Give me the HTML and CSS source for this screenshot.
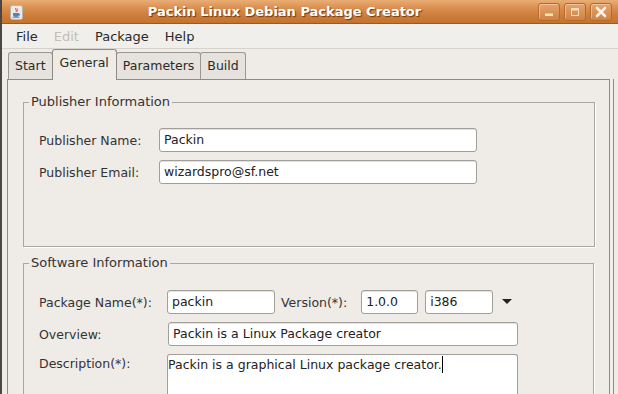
FILE: index.html
```html
<!DOCTYPE html>
<html>
<head>
<meta charset="utf-8">
<link rel="stylesheet" href="styles.css">
</head>
<body>
<div class="window">
  <div class="titlebar">
    <svg class="appicon" width="13" height="15" viewBox="0 0 13 15">
      <rect x="0.5" y="0.5" width="12" height="14" rx="2" fill="#eceae6" stroke="#b9b4ad"/>
      <path d="M6 3 C4.5 4.5 7.5 5 6 7" stroke="#d2452b" stroke-width="1" fill="none"/>
      <path d="M7.5 3.5 C6.8 4.5 8.3 5 7.4 6.5" stroke="#d2452b" stroke-width="0.8" fill="none"/>
      <path d="M3 8 h6 v1.5 a3 2.5 0 0 1 -6 0 z" fill="#5a7fb6"/>
      <path d="M9 8.6 a1.2 1.2 0 0 1 0 2.2" stroke="#5a7fb6" stroke-width="0.9" fill="none"/>
      <path d="M2.5 12.3 h7" stroke="#5a7fb6" stroke-width="0.9"/>
    </svg>
    <div class="title">Packin Linux Debian Package Creator</div>
    <div class="wbtns">
      <span class="wbtn"><svg width="10" height="10" viewBox="0 0 10 10"><rect x="1" y="6.5" width="8" height="2.5" fill="#f6e6b4"/></svg></span>
      <span class="wbtn"><svg width="10" height="10" viewBox="0 0 10 10"><rect x="1.5" y="1.5" width="7" height="7" fill="none" stroke="#f4dcb8" stroke-width="1"/><rect x="1.5" y="1.5" width="7" height="2" fill="#f4dcb8"/></svg></span>
      <span class="wbtn"><svg width="12" height="12" viewBox="0 0 12 12"><path d="M2 2 L10 10 M10 2 L2 10" stroke="#fbf3ea" stroke-width="2.6" stroke-linecap="round"/></svg></span>
    </div>
  </div>
  <div class="menubar">
    <span class="menu">File</span>
    <span class="menu disabled">Edit</span>
    <span class="menu">Package</span>
    <span class="menu">Help</span>
  </div>
  <div class="tabs">
    <div class="tab">Start</div>
    <div class="tab sel">General</div>
    <div class="tab">Parameters</div>
    <div class="tab">Build</div>
  </div>
  <div class="panel">
    <fieldset class="group pub">
      <legend>Publisher Information</legend>
      <div class="form pubform">
        <span class="lbl">Publisher Name:</span><span class="field w318">Packin</span>
        <span class="lbl">Publisher Email:</span><span class="field w318">wizardspro@sf.net</span>
      </div>
    </fieldset>
    <fieldset class="group soft">
      <legend>Software Information</legend>
      <div class="form softform">
        <span class="lbl">Package Name(*):</span>
        <div class="row">
          <span class="field wname">packin</span>
          <span class="lbl ver">Version(*):</span>
          <span class="field wver">1.0.0</span>
          <div class="combo">
            <span class="field warch">i386</span>
            <span class="arrow"><svg width="10" height="6" viewBox="0 0 10 6"><path d="M0 0 H10 L5 5 Z" fill="#222"/></svg></span>
          </div>
        </div>
        <span class="lbl">Overview:</span><span class="field wover">Packin is a Linux Package creator</span>
        <span class="lbl desc">Description(*):</span><div class="area">Packin is a graphical Linux package creator.<span class="caret"></span></div>
      </div>
    </fieldset>
  </div>
</div>
</body>
</html>
```
FILE: styles.css
```css
html, body {
  margin: 0;
  padding: 0;
  height: 100%;
  overflow: hidden;
}
body {
  background: #efebe7;
  font-family: "DejaVu Sans", "Liberation Sans", sans-serif;
  font-size: 12.5px;
  color: #333;
}
.window {
  height: 394px;
  overflow: hidden;
  border-left: 2px solid #4a4744;
  box-sizing: border-box;
}
.titlebar {
  height: 24px;
  display: flex;
  align-items: center;
  background: linear-gradient(#e9ad74 0%, #d98f4f 35%, #cc7c39 70%, #c4732f 100%);
  border-bottom: 1px solid #9c5a22;
  box-sizing: border-box;
  padding-left: 8px;
  padding-right: 6px;
}
.appicon {
  display: block;
  margin-top: 1px;
}
.title {
  flex: 1;
  text-align: center;
  color: #fff;
  font-weight: bold;
  font-size: 13px;
  text-shadow: 1px 1px 1px #6b3a12;
  padding-left: 8px;
}
.wbtns {
  display: flex;
  gap: 4px;
}
.wbtn {
  width: 22px;
  height: 18px;
  box-sizing: border-box;
  border: 1px solid #b46a2d;
  border-radius: 3px;
  background: linear-gradient(#e6a46a, #cf8244);
  box-shadow: inset 1px 1px 0 rgba(255,255,255,0.35);
  display: flex;
  align-items: center;
  justify-content: center;
}
.menubar {
  height: 24px;
  display: flex;
  align-items: center;
  background: #f1efeb;
  border-bottom: 1px solid #d6d2cc;
  padding-left: 6px;
  font-size: 13px;
}
.menu {
  padding: 0 8px;
  color: #2a2a2a;
}
.menu.disabled {
  color: #c2bdb6;
}
.tabs {
  display: flex;
  align-items: flex-end;
  padding-left: 6px;
  height: 30px;
}
.tab {
  height: 27px;
  box-sizing: border-box;
  border: 1px solid #9a9792;
  border-bottom: none;
  border-radius: 3px 3px 0 0;
  background: #e6e2dd;
  padding: 5px 6px 0 6px;
  color: #2a2a2a;
  margin-right: -1px;
}
.tab.sel {
  height: 31px;
  background: #efebe7;
  padding: 5px 7px 0 7px;
  position: relative;
  z-index: 1;
  margin-bottom: -1px;
  border-color: #8e8b86;
}
.panel {
  margin-left: 5px;
  width: 603px;
  height: 320px;
  box-sizing: border-box;
  border: 1px solid #8e8b86;
  border-bottom: none;
  padding: 14px 15px 0 15px;
  box-shadow: 3px 0 0 #f2efeb, 4px 0 0 #8e8b86;
}
.group {
  margin: 0;
  padding: 0 0 0 15px;
  border: 1px solid #aaa7a2;
  box-shadow: 1px 1px 0 #fff;
  min-width: 0;
}
.group legend {
  margin-left: -10px;
  padding: 0 2px;
  color: #333;
  line-height: 16px;
  font-size: 13px;
}
.pub {
  width: 572px;
  box-sizing: border-box;
  height: 153px;
}
.soft {
  width: 571px;
  box-sizing: border-box;
  margin-top: 8px;
  height: 200px;
  border-bottom: none;
}
.form {
  display: grid;
  row-gap: 8px;
  align-items: center;
}
.pubform {
  grid-template-columns: 120px auto;
  padding-top: 18px;
  justify-content: start;
}
.softform {
  grid-template-columns: 128px auto;
  padding-top: 19px;
  justify-content: start;
}
.lbl {
  color: #333;
}
.lbl.desc {
  align-self: start;
  padding-top: 2px;
}
.field {
  display: block;
  height: 24px;
  box-sizing: border-box;
  border: 1px solid #a29f9a;
  border-radius: 3px;
  background: #fff;
  box-shadow: inset 0 1px 0 #e4e1dc;
  padding: 0 0 0 4px;
  line-height: 22px;
  color: #222;
  white-space: nowrap;
  overflow: hidden;
}
.w318 { width: 318px; }
.wname { width: 108px; }
.wver { width: 57px; }
.warch { width: 68px; }
.wover { width: 350px; margin-left: 1px; }
.row {
  display: flex;
  align-items: center;
}
.ver {
  margin-left: 6px;
  margin-right: 14px;
}
.combo {
  display: flex;
  align-items: center;
  margin-left: 7px;
}
.arrow {
  display: flex;
  width: 24px;
  justify-content: center;
  margin-left: 2px;
}
.area {
  align-self: start;
  width: 351px;
  height: 50px;
  box-sizing: border-box;
  border: 1px solid #a29f9a;
  border-bottom: none;
  border-radius: 3px 3px 0 0;
  background: #fff;
  color: #222;
  line-height: 18px;
  padding: 1px 0 0 0;
  white-space: nowrap;
}
.caret {
  display: inline-block;
  width: 1px;
  height: 17px;
  background: #000;
  vertical-align: -4px;
}
```
